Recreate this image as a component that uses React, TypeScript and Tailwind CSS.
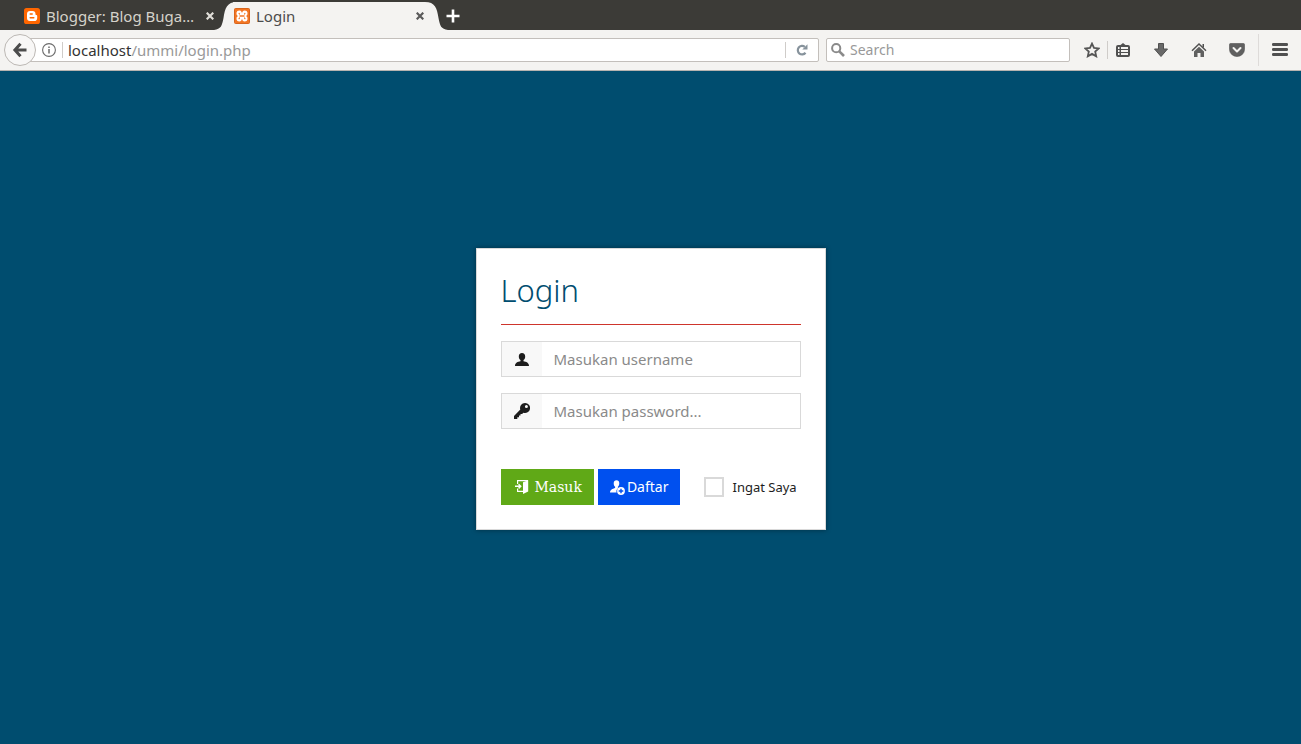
import type { ReactNode } from "react";

function Divider({ className = "" }: { className?: string }) {
  return <span aria-hidden="true" className={`w-px shrink-0 bg-[#cfccc9] ${className}`} />;
}

function CloseButton({ label, className }: { label: string; className: string }) {
  return (
    <button type="button" aria-label={label} className={`flex size-2 shrink-0 items-center justify-center ${className}`}>
      <svg viewBox="0 0 8 8" className="size-2" fill="none" stroke="currentColor" strokeWidth="2.2">
        <path d="M0.7 0.7 7.3 7.3M7.3 0.7 0.7 7.3" />
      </svg>
    </button>
  );
}

function BloggerIcon() {
  return (
    <svg viewBox="0 0 16 16" className="size-4 shrink-0">
      <rect width="16" height="16" rx="2.6" fill="#ff6600" />
      <path
        d="M6 3h2.6A2.9 2.9 0 0 1 11.5 5.9c0 .8.2 1.1.8 1.1s.9.3.9.9v2A3.1 3.1 0 0 1 10.1 13H6a3 3 0 0 1-3-3V6a3 3 0 0 1 3-3Z"
        fill="#fff"
      />
      <path d="M6.2 6.1h2M6.2 9.8h3.6" stroke="#ff6600" strokeWidth="1.5" strokeLinecap="round" />
    </svg>
  );
}

function XamppIcon() {
  return (
    <svg viewBox="0 0 16 16" className="size-4 shrink-0">
      <rect x="0.5" y="0.5" width="15" height="15" rx="1" fill="#f37623" stroke="#d9651c" />
      <path
        d="M5.2 3.6c-1.9 0-2.5 2.6-.6 3.6v1.6c-1.9 1-1.3 3.6.6 3.6 1.6 0 1.8-1.3 1.8-2.6h2c0 1.3.2 2.6 1.8 2.6 1.9 0 2.5-2.6.6-3.6V7.2c1.9-1 1.3-3.6-.6-3.6-1.6 0-1.8 1.3-1.8 2.6H7c0-1.3-.2-2.6-1.8-2.6Z"
        fill="none"
        stroke="#fff"
        strokeWidth="2.1"
      />
    </svg>
  );
}

function TabCurve({ className = "" }: { className?: string }) {
  return (
    <svg viewBox="0 0 23 28" className={`h-7 w-[23px] shrink-0 ${className}`}>
      <path d="M0 28C7 27 8 24 9.5 16C11 6 13 0 23 0V28Z" fill="#f4f3f1" />
    </svg>
  );
}

function TabStrip() {
  return (
    <nav aria-label="Tabs" className="flex h-[30px] items-end bg-[#3c3b37]">
      <div className="flex h-7 w-[214px] shrink-0 items-center pl-6 text-[#d5d2ca]">
        <BloggerIcon />
        <span className="ml-1.5 flex-1 truncate text-[15px] leading-5">Blogger: Blog Buga…</span>
        <CloseButton label="Close Blogger tab" className="text-[#e0ded8]" />
      </div>
      <TabCurve className="-mr-1" />
      <div className="z-10 flex h-7 w-[192px] items-center bg-[#f4f3f1] pl-px text-[#4c4c4c]">
        <XamppIcon />
        <span className="ml-1.5 flex-1 text-[15px] leading-5">Login</span>
        <CloseButton label="Close Login tab" className="mr-px text-[#5a5a5a]" />
      </div>
      <TabCurve className="-mr-0.5 -scale-x-100" />
      <button type="button" aria-label="New tab" className="flex h-7 w-3.5 items-center justify-center">
        <svg viewBox="0 0 14 14" className="size-3.5" stroke="#fff" strokeWidth="2.6">
          <path d="M7 0.5V13.5M0.5 7H13.5" />
        </svg>
      </button>
    </nav>
  );
}

function ToolButton({ label, children }: { label: string; children: ReactNode }) {
  return (
    <button type="button" aria-label={label} className="flex size-4 shrink-0 items-center justify-center text-[#555]">
      {children}
    </button>
  );
}

function Toolbar() {
  return (
    <div className="flex h-[41px] items-center border-b border-[#b6b3b0] bg-[#f4f3f1] pr-[13px] pl-1">
      <button
        type="button"
        aria-label="Back"
        className="z-10 flex size-8 shrink-0 items-center justify-center rounded-full border border-[#bcb8b4] bg-[#f8f7f6]"
      >
        <svg viewBox="0 0 16 16" className="size-4" fill="none" stroke="#4c4c4c" strokeWidth="3">
          <path d="M8.5 1.8 2.9 8l5.600 6.200M3 8H14.500" />
        </svg>
      </button>
      <div className="-ml-2 flex h-6 min-w-0 flex-1 items-center rounded-[2px] border border-[#c3bfbb] bg-white pl-3">
        <svg viewBox="0 0 14 14" className="ml-px size-3.5 shrink-0" fill="none" stroke="#6b6b6b">
          <circle cx="7" cy="7" r="6.4" strokeWidth="1.1" />
          <path d="M7 6v4.5M7 3.5v1.4" strokeWidth="1.5" />
        </svg>
        <Divider className="ml-1.5 h-4" />
        <div className="relative ml-[5px] min-w-0 flex-1">
          <input
            aria-label="Address"
            defaultValue="localhost/ummi/login.php"
            className="block h-5 w-full bg-transparent text-[15px] leading-5 text-transparent caret-black outline-none"
          />
          <span aria-hidden="true" className="pointer-events-none absolute inset-0 truncate text-[15px] leading-5 text-[#999]">
            <span className="text-[#333]">localhost</span>/ummi/login.php
          </span>
        </div>
        <Divider className="h-4" />
        <button type="button" aria-label="Reload" className="flex w-8 shrink-0 items-center justify-center">
          <svg viewBox="0 0 12 12" className="size-3" fill="none" stroke="#87939c" strokeWidth="2.2">
            <path d="M9.5 8.8A4.3 4.3 0 1 1 8.8 2.8" />
            <path d="M11.5 0.3V5.5H6.3Z" fill="#87939c" stroke="none" />
          </svg>
        </button>
      </div>
      <label className="ml-[7px] flex h-6 w-[244px] shrink-0 items-center rounded-[2px] border border-[#c3bfbb] bg-white pl-1">
        <svg viewBox="0 0 14 14" className="size-3.5 shrink-0" fill="none" stroke="#8a8a8a">
          <circle cx="5.2" cy="5.2" r="4.1" strokeWidth="2" />
          <path d="M8.3 8.3 13 13" strokeWidth="2.6" />
        </svg>
        <input
          aria-label="Search"
          placeholder="Search"
          className="ml-[5px] h-5 min-w-0 flex-1 text-[14px] leading-5 outline-none placeholder:text-[#999]"
        />
      </label>
      <div className="ml-3.5 flex shrink-0 items-center">
        <ToolButton label="Bookmark this page">
          <svg viewBox="0 0 16 16" className="size-4" fill="none" stroke="currentColor" strokeWidth="1.8">
            <path d="m8 1.600 2 4.300 4.700.5-3.500 3.200 1 4.700L8 11.900l-4.200 2.400 1-4.700L1.300 6.400l4.700-.5Z" />
          </svg>
        </ToolButton>
        <Divider className="mx-[7px] h-4.5" />
        <ToolButton label="Bookmarks">
          <svg viewBox="0 0 16 16" className="size-4">
            <path d="M3 3h2.500L8 1l2.500 2H13a2 2 0 0 1 2 2v8a2 2 0 0 1-2 2H3a2 2 0 0 1-2-2V5a2 2 0 0 1 2-2Z" fill="#505050" />
            <path d="M3 5h1.500v2H3ZM6 5h7v2H6ZM3 8h1.500v2H3ZM6 8h7v2H6ZM3 11h1.500v2H3ZM6 11h7v2H6Z" fill="#f4f3f1" />
          </svg>
        </ToolButton>
        <div className="ml-[22px] flex gap-[22px]">
          <ToolButton label="Downloads">
            <svg viewBox="0 0 16 16" className="size-4">
              <path d="M5.5 1.500h5V7H14.500L8 14.500 1.500 7h4Z" fill="#686868" stroke="#505050" />
            </svg>
          </ToolButton>
          <ToolButton label="Home">
            <svg viewBox="0 0 16 16" className="size-4">
              <path d="M1 8.700 8 2l7 6.700" fill="none" stroke="#505050" strokeWidth="1.500" />
              <path d="M11.500 2H13v4l-1.500-1.500Z" fill="#505050" />
              <path d="M8 4.800 13 9.600V15H9.500v-4h-3v4H3V9.600Z" fill="#606060" />
            </svg>
          </ToolButton>
          <ToolButton label="Pocket">
            <svg viewBox="0 0 16 16" className="size-4">
              <path d="M1.500 1.500h13a1 1 0 0 1 1 1V7.500a7.500 7 0 0 1-15 0v-5a1 1 0 0 1 1-1Z" fill="#606060" stroke="#505050" strokeWidth="0.6" />
              <path d="m4.500 6 3.500 3.500L11.500 6" fill="none" stroke="#f4f3f1" strokeWidth="2" strokeLinecap="round" strokeLinejoin="round" />
            </svg>
          </ToolButton>
        </div>
        <Divider className="mr-[13px] ml-[13px] h-8 opacity-60" />
        <ToolButton label="Open menu">
          <svg viewBox="0 0 16 16" className="size-4" fill="#505050">
            <rect y="1" width="16" height="3" rx="1.2" />
            <rect y="6" width="16" height="3" rx="1.2" />
            <rect y="11" width="16" height="3" rx="1.2" />
          </svg>
        </ToolButton>
      </div>
    </div>
  );
}

function Field({ id, type, placeholder, icon }: { id: string; type: string; placeholder: string; icon: ReactNode }) {
  return (
    <div className="mt-4 flex h-9 border border-[#d9d9d9] bg-white">
      <label htmlFor={id} aria-label={placeholder} className="flex w-10 shrink-0 items-center justify-center bg-[#f8f8f8] text-[#1d1d1d]">
        {icon}
      </label>
      <input
        id={id}
        type={type}
        placeholder={placeholder}
        className="min-w-0 flex-1 px-3 text-[15px] leading-5 text-[#262626] outline-none placeholder:text-[#8a8a8a]"
      />
    </div>
  );
}

function LoginForm() {
  return (
    <form
      onSubmit={(event) => event.preventDefault()}
      className="w-[350px] border border-[#d9d9d9] bg-white p-6 text-[#1d1d1d] shadow-[0_0_5px_rgba(0,0,0,0.4)]"
    >
      <h1 className="text-[31px] leading-[34px] font-light text-[#004d6f]">Login</h1>
      <hr className="mt-[17px] border-[#ce352c]" />
      <Field
        id="username"
        type="text"
        placeholder="Masukan username"
        icon={
          <svg viewBox="0 0 16 16" className="size-4" fill="currentColor">
            <path d="M8 2c2 0 3.200 1.400 3.200 3.400 0 1.700-.7 3-1.700 3.700v1.200c2.700.5 5.500 1.500 5.500 4.700H1c0-3.200 2.800-4.200 5.500-4.700V9.100c-1-.7-1.700-2-1.700-3.700C4.800 3.400 6 2 8 2Z" />
          </svg>
        }
      />
      <Field
        id="password"
        type="password"
        placeholder="Masukan password..."
        icon={
          <svg viewBox="0 0 16 16" className="size-4" fill="currentColor" fillRule="evenodd">
            <path d="M11 0a5 5 0 1 1-1.600 9.700L8.100 11H6.500v1.600H5v1.600H3.300V16H0v-2.900l6.300-6.500A5 5 0 0 1 11 0Zm1.400 2.100a1.500 1.500 0 1 0 0 3 1.500 1.500 0 0 0 0-3Z" />
          </svg>
        }
      />
      <div className="mt-10 flex h-9 items-center whitespace-nowrap">
        <button type="submit" className="flex h-9 items-center bg-[#60a917] pr-3 pl-3.5 font-['DejaVu_Serif','Liberation_Serif',serif] text-[14px] leading-5 text-white">
          <svg viewBox="0 0 14 14" className="mr-1.5 size-3.5" fill="none" stroke="#fff">
            <path d="M2.600 4V.7H13M2.600 8.500V11.300H8" strokeWidth="1.200" />
            <path d="M0 6.300h5.500M3.600 4.200 5.700 6.300 3.600 8.400" strokeWidth="1.500" />
            <path d="M8 2.300 13.200.3v11.200L8 14Z" fill="#fff" stroke="none" />
          </svg>
          Masuk
        </button>
        <button type="button" className="ml-1 flex h-9 items-center bg-[#0050ef] px-3 text-[14px] leading-5 text-white">
          <svg viewBox="0 0 15 15" className="mr-0.5 size-[15px]" fill="#fff">
            <path d="M6.500.3c1.700 0 2.800 1.200 2.800 3S8.500 6.300 7.900 6.800v1.100l.3.100A4.200 4.200 0 0 0 6.600 12.600H0c0-3 2.500-3.800 5.100-4.700V6.800c-.8-.6-1.400-1.700-1.400-3.500s1.100-3 2.800-3Z" />
            <circle cx="11" cy="11" r="3.900" />
            <path d="M11 8.700v4.600M8.700 11h4.600" stroke="#0050ef" strokeWidth="1.400" />
          </svg>
          Daftar
        </button>
        <label className="ml-6 flex items-center gap-2 text-[13px] leading-5">
          <input type="checkbox" className="size-5 shrink-0 appearance-none border-2 border-[#d9d9d9] bg-white checked:bg-[#1d1d1d] checked:ring-4 checked:ring-white checked:ring-inset" />
          Ingat Saya
        </label>
      </div>
    </form>
  );
}

export default function App() {
  return (
    <div className="flex min-h-screen flex-col bg-[#004d6f] font-['Noto_Sans','Open_Sans',sans-serif]">
      <header>
        <TabStrip />
        <Toolbar />
      </header>
      <main className="flex flex-1 items-start justify-center pt-[177px]">
        <LoginForm />
      </main>
    </div>
  );
}
